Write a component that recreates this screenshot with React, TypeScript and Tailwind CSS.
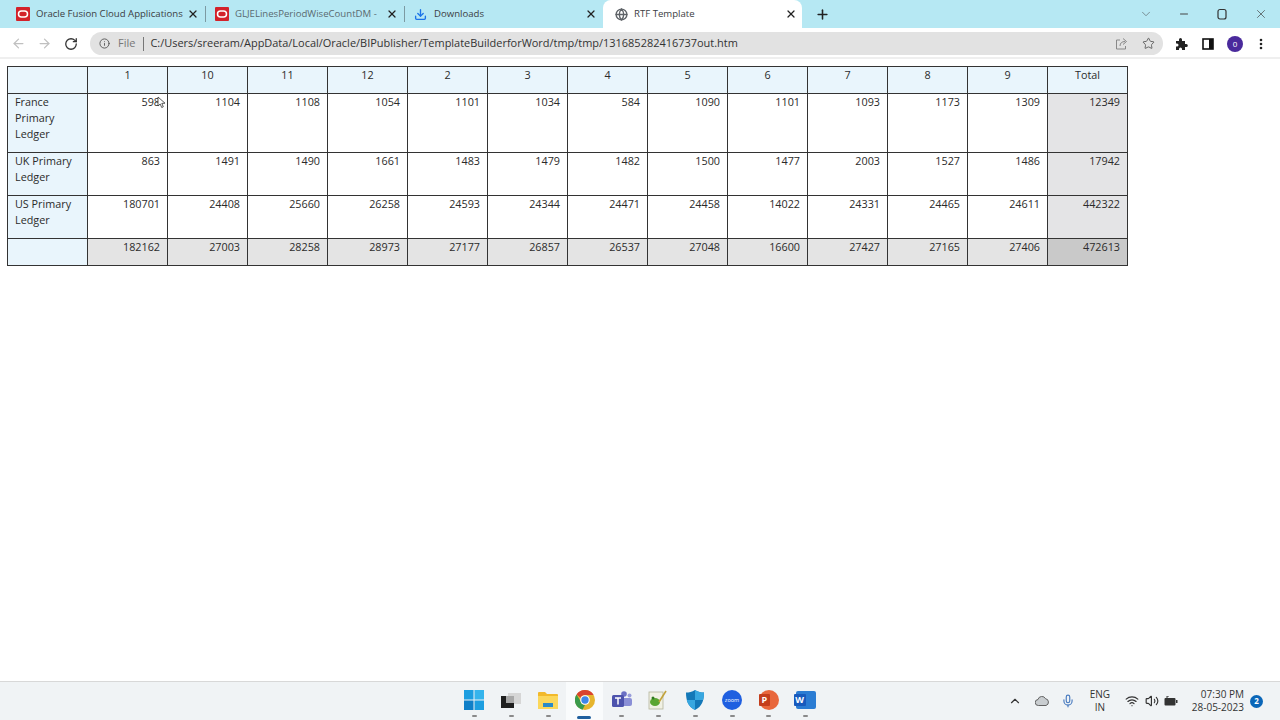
import { ArrowLeft, ArrowRight, RotateCw, Info, Star, X, Plus, ChevronDown, ChevronUp, Minus, Globe, Download, Mic, Wifi, Volume2 } from 'lucide-react';

const months = ['1', '10', '11', '12', '2', '3', '4', '5', '6', '7', '8', '9'];

const rows = [
  { label: ['France', 'Primary', 'Ledger'], height: 'h-[59px]', values: ['598', '1104', '1108', '1054', '1101', '1034', '584', '1090', '1101', '1093', '1173', '1309'], total: '12349' },
  { label: ['UK Primary', 'Ledger'], height: 'h-[43px]', values: ['863', '1491', '1490', '1661', '1483', '1479', '1482', '1500', '1477', '2003', '1527', '1486'], total: '17942' },
  { label: ['US Primary', 'Ledger'], height: 'h-[43px]', values: ['180701', '24408', '25660', '26258', '24593', '24344', '24471', '24458', '14022', '24331', '24465', '24611'], total: '442322' },
];

const totals = ['182162', '27003', '28258', '28973', '27177', '26857', '26537', '27048', '16600', '27427', '27165', '27406'];

function OracleIcon() {
  return (
    <svg width="14" height="14" viewBox="0 0 14 14" className="shrink-0">
      <rect width="14" height="14" rx="1" fill="#d3222a" />
      <rect x="2.5" y="4" width="9" height="6" rx="3" fill="none" stroke="#fff" strokeWidth="1.5" />
    </svg>
  );
}

function Tab({ icon, title, active, divider, muted }: { icon: React.ReactNode; title: string; active?: boolean; divider?: boolean; muted?: boolean }) {
  return (
    <div className={`relative flex h-[28px] w-[199px] items-center ${active ? 'rounded-t-lg bg-white pl-[12px]' : 'pl-[10px]'}`}>
      <div className={`flex shrink-0 items-center ${active ? 'w-[19px]' : 'w-[20px]'}`}>{icon}</div>
      <span className={`w-[150px] whitespace-nowrap text-[9.6px] ${muted ? 'text-[#5a6a70]' : 'text-[#3c4043]'}`}>{title}</span>
      <X size={12} strokeWidth={2.5} className="ml-[1px] shrink-0 text-[#222]" />
      {divider && <div className="absolute right-[-1px] top-[6px] h-[16px] w-px bg-[#7c9aa2]" />}
    </div>
  );
}

function TaskIcon({ children, active }: { children: React.ReactNode; active?: boolean }) {
  return (
    <div className={`relative flex h-[38px] w-[36.8px] items-center justify-center pb-[2px] ${active ? 'bg-[#f9fbfc]' : ''}`}>
      {children}
      {active ? (
        <div className="absolute bottom-[1px] left-[11px] h-[3px] w-[14px] rounded bg-[#1f5f9e]" />
      ) : (
        <div className="absolute bottom-[3px] left-[16px] h-[2px] w-[5px] rounded bg-[#8a8a8a]" />
      )}
    </div>
  );
}

export default function App() {
  return (
    <div className="relative flex h-[720px] w-[1280px] flex-col overflow-hidden bg-white font-['Open_Sans',sans-serif]">
      {/* Tab strip */}
      <div className="flex h-[28px] shrink-0 items-center bg-[#b6e8f3] pl-[6px]">
        <Tab icon={<OracleIcon />} title="Oracle Fusion Cloud Applications" divider />
        <Tab icon={<OracleIcon />} title="GLJELinesPeriodWiseCountDM -" divider muted />
        <Tab icon={<Download size={13} strokeWidth={2.5} className="text-[#1a73e8]" />} title="Downloads" />
        <Tab icon={<Globe size={13} strokeWidth={2.5} className="text-[#5f6368]" />} title="RTF Template" active />
        <Plus size={15} strokeWidth={2.5} className="ml-[13px] text-[#222]" />
        <ChevronDown size={14} strokeWidth={1.4} className="ml-[309px] text-[#6b7b80]" />
        <Minus size={12} className="ml-[25px] text-[#444]" />
        <svg width="10" height="12" viewBox="0 0 10 12" className="ml-[27px]"><rect x="1" y="1.5" width="8" height="9.5" rx="2" fill="none" stroke="#333" strokeWidth="1.2" /></svg>
        <X size={14} strokeWidth={1.2} className="ml-[27px] text-[#444]" />
      </div>

      {/* Toolbar */}
      <div className="flex h-[31px] shrink-0 items-center border-b-[2px] border-[#efefef] bg-white pl-[11px] pt-[2px]">
        <ArrowLeft size={15} className="text-[#c0c0c0]" />
        <ArrowRight size={15} className="ml-[11px] text-[#c0c0c0]" />
        <RotateCw size={14} strokeWidth={2.2} className="ml-[12px] text-[#333]" />
        <div className="ml-[12px] flex h-[23px] w-[1073px] items-center rounded-full bg-[#e2e2e2] pl-[9px]">
          <Info size={11} className="text-[#555]" />
          <span className="ml-[8px] text-[11px] text-[#777]">File</span>
          <div className="ml-[8px] h-[14px] w-px bg-[#777]" />
          <span className="ml-[6px] w-[960px] whitespace-nowrap text-[10.96px] text-[#333]">C:/Users/sreeram/AppData/Local/Oracle/BIPublisher/TemplateBuilderforWord/tmp/tmp/131685282416737out.htm</span>
          <svg width="13" height="13" viewBox="0 0 13 13" fill="none" stroke="#888" className="ml-[5px] shrink-0">
            <path d="M5 3H1.500v9h9V9M5 9c0-3 2-4.500 5-4.500M8 1.500l3.500 3-3.500 3" />
          </svg>
          <Star size={13} strokeWidth={1.6} className="ml-[14px] shrink-0 text-[#555]" />
        </div>
        <svg width="13" height="13" viewBox="0 0 13 13" className="ml-[12px] shrink-0">
          <path d="M1 4h3V2.500a1.500 1.500 0 0 1 3 0V4h3v3h1.300a1.500 1.500 0 0 1 0 3H10v3H7v-1a1.500 1.500 0 0 0-3 0v1H1V9.500h1a1.500 1.500 0 0 0 0-3H1z" fill="#222" />
        </svg>
        <svg width="12" height="12" viewBox="0 0 12 12" className="ml-[14px] shrink-0">
          <rect x="1" y="1" width="10" height="10" fill="none" stroke="#111" strokeWidth="1.6" />
          <rect x="7" y="1" width="4" height="10" fill="#111" />
        </svg>
        <div className="ml-[13px] flex h-[16px] w-[16px] shrink-0 items-center justify-center rounded-full bg-[#4a2a9c] text-[8px] text-white">0</div>
        <svg width="4" height="12" viewBox="0 0 4 12" className="ml-[16px] shrink-0">
          <circle cx="2" cy="2" r="1.300" fill="#222" /><circle cx="2" cy="6" r="1.300" fill="#222" /><circle cx="2" cy="10" r="1.300" fill="#222" />
        </svg>
      </div>

      {/* Report */}
      <div className="flex-1 pl-[7px] pt-[7px]">
        <table className="w-[1120px] table-fixed border-collapse text-[10.8px] leading-[16px] text-[#2b2b2b]">
          <tbody>
            <tr className="h-[27px]">
              <td className="w-[80px] border border-[#333] bg-[#e9f5fc]" />
              {months.map((m) => (
                <td key={m} className="w-[80px] border border-[#333] bg-[#e9f5fc] pb-[7px] text-center align-top">{m}</td>
              ))}
              <td className="w-[80px] border border-[#333] border-l-[#666] bg-[#e9f5fc] pb-[7px] text-center align-top">Total</td>
            </tr>
            {rows.map((row) => (
              <tr key={row.total} className={row.height}>
                <td className="border border-[#333] bg-[#e9f5fc] pl-[7px] align-top">
                  {row.label.map((line) => (
                    <div key={line}>{line}</div>
                  ))}
                </td>
                {row.values.map((v, i) => (
                  <td key={i} className="border border-[#333] pr-[7px] text-right align-top">{v}</td>
                ))}
                <td className="border border-[#333] border-l-[#666] bg-[#e4e4e6] pr-[7px] text-right align-top">{row.total}</td>
              </tr>
            ))}
            <tr className="h-[27px]">
              <td className="border border-[#333] bg-[#e9f5fc]" />
              {totals.map((v, i) => (
                <td key={i} className="border border-[#333] bg-[#e4e4e4] pr-[7px] text-right align-top">{v}</td>
              ))}
              <td className="border border-[#333] border-l-[#666] bg-[#c9c9c9] pr-[7px] text-right align-top">472613</td>
            </tr>
          </tbody>
        </table>
      </div>

      {/* Mouse cursor */}
      <svg width="9" height="13" viewBox="0 0 9 13" className="absolute left-[157px] top-[96px]">
        <path d="M1 1v9l2.200-2 1.500 3.500 1.600-.7L4.800 7.400 8 7.200z" fill="#fff" stroke="#333" strokeWidth="0.8" />
      </svg>

      {/* Taskbar */}
      <div className="flex h-[39px] shrink-0 items-center border-t border-[#d8d8d8] bg-[#f0f3f5] pl-[456px]">
        <TaskIcon>
          <svg width="20" height="20" viewBox="0 0 20 20">
            <rect width="9.500" height="9.500" fill="#1d9ee0" /><rect x="10.500" width="9.500" height="9.500" fill="#35b4ec" />
            <rect y="10.500" width="9.500" height="9.500" fill="#0f7fc8" /><rect x="10.500" y="10.500" width="9.500" height="9.500" fill="#1d9ee0" />
          </svg>
        </TaskIcon>
        <TaskIcon>
          <svg width="20" height="16" viewBox="0 0 20 16">
            <rect x="7" y="1" width="13" height="11" fill="#d6d6d6" /><rect y="4" width="13" height="12" fill="#1f1f1f" /><rect x="5" y="4" width="8" height="7" fill="#a8a8a8" />
          </svg>
        </TaskIcon>
        <TaskIcon>
          <svg width="20" height="18" viewBox="0 0 20 18">
            <path d="M0 2a1 1 0 0 1 1-1h6l2 2h10a1 1 0 0 1 1 1v13H0z" fill="#f2b92b" /><rect y="5" width="20" height="13" fill="#fbd75b" /><rect x="5" y="12" width="10" height="4" fill="#2a8ac9" />
          </svg>
        </TaskIcon>
        <TaskIcon active>
          <svg width="20" height="20" viewBox="0 0 20 20">
            <circle cx="10" cy="10" r="10" fill="#e6b52e" />
            <path d="M10 0a10 10 0 0 1 8.660 5H10a5 5 0 0 0-4.500 2.800L1.500 4.500A10 10 0 0 1 10 0z" fill="#d9432f" />
            <path d="M1.500 4.500l4 6.500a5 5 0 0 0 4.500 4l-2.500 4.700A10 10 0 0 1 1.500 4.500z" fill="#3a9a4b" />
            <circle cx="10" cy="10" r="4.800" fill="#fff" /><circle cx="10" cy="10" r="3.700" fill="#3f86e8" />
          </svg>
        </TaskIcon>
        <TaskIcon>
          <svg width="20" height="18" viewBox="0 0 20 18">
            <circle cx="12" cy="3" r="2.800" fill="#6b70c4" /><circle cx="17.500" cy="4.500" r="2" fill="#9a9edb" />
            <rect x="10" y="7" width="10" height="8" rx="2" fill="#8a8fd6" /><rect y="4" width="12" height="12" rx="1.500" fill="#4d53ad" />
            <path d="M3 7h6M6 7v6.500" stroke="#fff" strokeWidth="1.500" />
          </svg>
        </TaskIcon>
        <TaskIcon>
          <svg width="20" height="20" viewBox="0 0 20 20">
            <rect x="1" y="2" width="14" height="17" fill="#f1f1e4" stroke="#b5b59c" strokeWidth="0.8" />
            <ellipse cx="7" cy="12" rx="5" ry="4" fill="#5ba632" /><circle cx="5" cy="8" r="1.500" fill="#2f7a1d" />
            <path d="M11 12l7-11" stroke="#c2a23a" strokeWidth="1.600" />
          </svg>
        </TaskIcon>
        <TaskIcon>
          <svg width="18" height="20" viewBox="0 0 18 20">
            <path d="M9 0c3 2 6 2.500 9 2.500 0 8-2 14-9 17.500C2 16.500 0 10.500 0 2.500 3 2.500 6 2 9 0z" fill="#1478b8" />
            <path d="M9 0c3 2 6 2.500 9 2.500 0 2.500-.2 5-.8 7.500H9z" fill="#38a7e0" /><path d="M9 10H.8C1.800 14 4 17.500 9 20z" fill="#38a7e0" />
          </svg>
        </TaskIcon>
        <TaskIcon>
          <div className="flex h-[20px] w-[20px] items-center justify-center rounded-full bg-[#1f5fe0] text-[5.5px] text-white">zoom</div>
        </TaskIcon>
        <TaskIcon>
          <div className="relative flex h-[20px] w-[20px] items-center justify-center rounded-full bg-[#e8673c]">
            <span className="absolute left-0 top-[4px] flex h-[12px] w-[11px] items-center justify-center rounded-[1px] bg-[#c43e1c] text-[9px] font-bold text-white">P</span>
          </div>
        </TaskIcon>
        <TaskIcon>
          <div className="relative h-[18px] w-[20px] rounded-[2px] bg-[#2b7cd3]">
            <span className="absolute left-[-2px] top-[3px] flex h-[12px] w-[12px] items-center justify-center rounded-[1px] bg-[#185abd] text-[9px] font-bold text-white">W</span>
          </div>
        </TaskIcon>

        {/* System tray */}
        <ChevronUp size={14} strokeWidth={2} className="ml-[184px] text-[#333]" />
        <svg width="14" height="10" viewBox="0 0 14 10" className="ml-[13px]">
          <path d="M3.500 9.500a3 3 0 0 1-.5-6 4 4 0 0 1 7.500-.8 3.500 3.500 0 0 1 .5 6.800z" fill="#c9cdd0" stroke="#555" strokeWidth="0.9" />
        </svg>
        <Mic size={14} className="ml-[12px] text-[#4a7cc0]" />
        <div className="ml-[13px] w-[24px] text-center text-[10px] leading-[13px] text-[#333]">ENG<br />IN</div>
        <Wifi size={14} className="ml-[13px] text-[#333]" />
        <Volume2 size={14} className="ml-[6px] text-[#333]" />
        <svg width="14" height="10" viewBox="0 0 14 10" className="ml-[5px]">
          <rect x="0.500" y="2" width="11" height="7.500" rx="1" fill="#333" /><rect x="12" y="4" width="1.500" height="3" fill="#333" /><path d="M3 0v2M3 0h2" stroke="#333" />
        </svg>
        <div className="ml-[7px] w-[59px] text-right text-[10px] leading-[13px] text-[#333]">07:30 PM<br />28-05-2023</div>
        <div className="ml-[6px] flex h-[13px] w-[13px] items-center justify-center rounded-full bg-[#0a66b8] text-[8px] font-bold text-white">2</div>
      </div>
    </div>
  );
}
